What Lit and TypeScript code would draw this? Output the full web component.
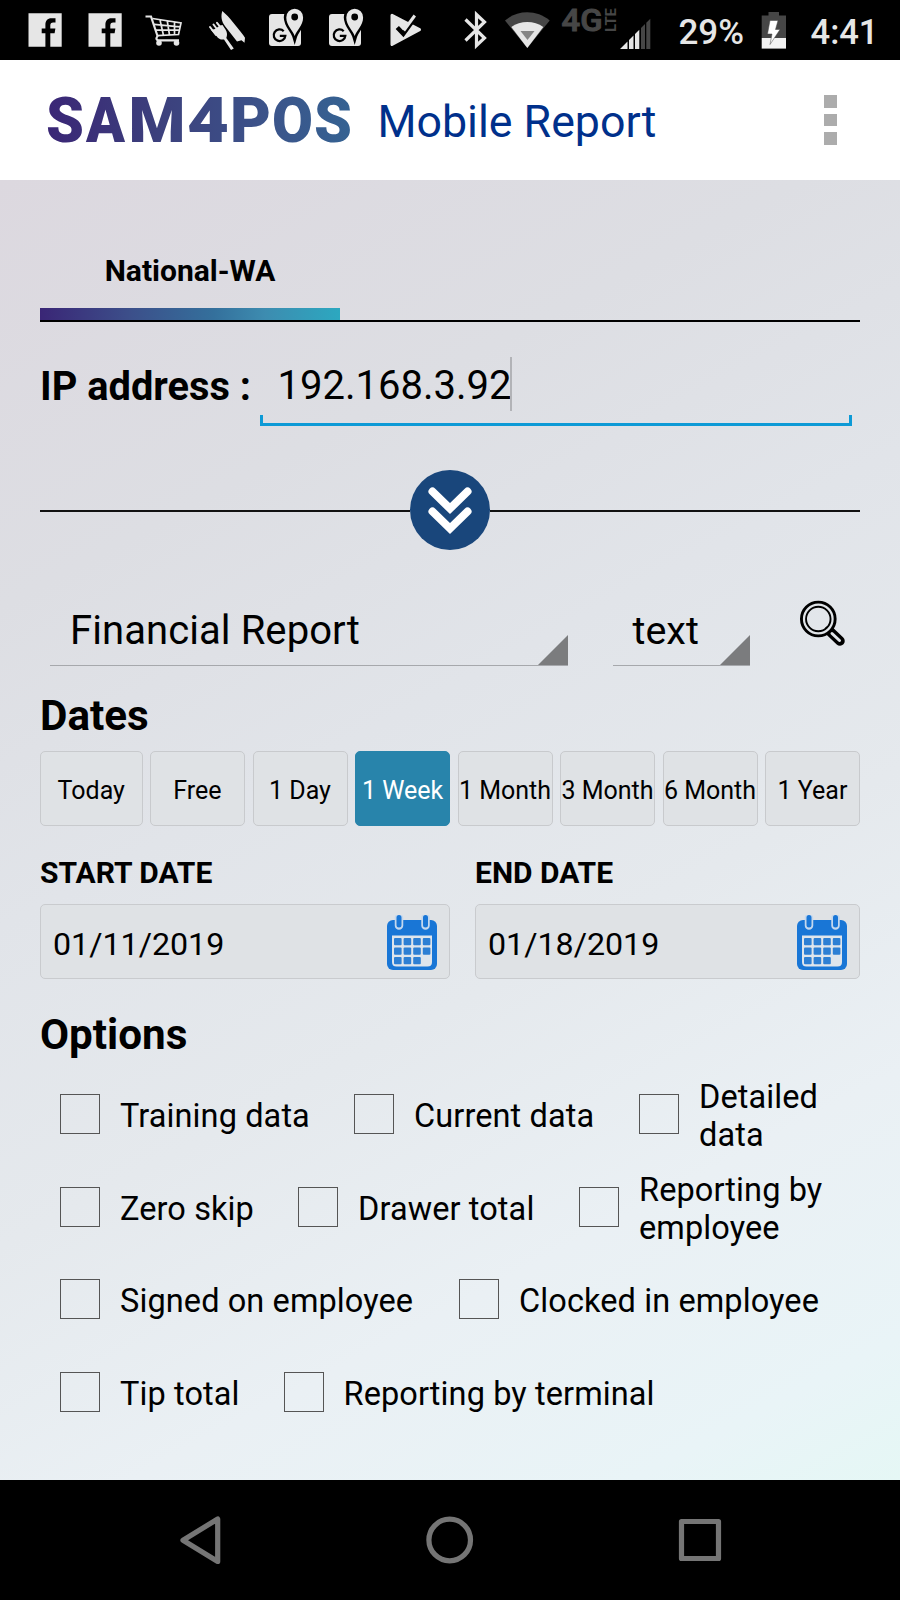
import { LitElement, html, svg, css } from "lit";
import { customElement, property, state } from "lit/decorators.js";

const G = "#e6e6e6";
const D = "#464646";

@customElement("status-bar")
class StatusBar extends LitElement {
  static styles = css`
    :host { display: flex; height: 60px; background: #000; }
    svg { display: block; flex: none; }
    text { font-family: Roboto, sans-serif; font-weight: 500; }
    .lte { font-weight: 700; }
  `;

  // Each glyph keeps bar coordinates, so a slice only names its left edge and width.
  private slice(x: number, w: number, body: unknown) {
    return html`<svg width=${w} height="60" viewBox="${x} 0 ${w} 60">${body}</svg>`;
  }

  private facebook(dx: number) {
    return svg`<g transform="translate(${dx} 0)"><path fill=${G} d="M28.5 13.3h33.2v33.4H28.500z"/>
      <path fill="#000" d="M50.300 47V33.200h4.300l.8-4.600H50.300v-3.200c0-1.900.9-2.900 2.900-2.900h2.300v-4.300h-4.100c-3.900 0-6 2.500-6 6.300v4.100h-3.700v4.600h3.700V47z"/></g>`;
  }

  private maps(dx: number) {
    return svg`<g transform="translate(${dx} 0)"><rect x="269" y="14" width="32" height="32" rx="3" fill=${G}/>
      <path d="M294.700 36c-1.600-5.600-8.400-10.500-8.400-18.600a8.400 8.700 0 0 1 16.800 0c0 8.100-6.800 13-8.400 18.600z" fill=${G} stroke="#000" stroke-width="5" paint-order="stroke"/>
      <circle cx="294.700" cy="17" r="3.400" fill="#000"/>
      <path d="M283.700 31.200a5.800 5.800 0 1 0 1.600 4.600h-5.500" fill="none" stroke="#000" stroke-width="2.300"/></g>`;
  }

  render() {
    return html`
      ${this.slice(0, 75, this.facebook(0))}
      ${this.slice(75, 60, this.facebook(60))}
      ${this.slice(135, 60, svg`<g fill="none" stroke=${G} stroke-width="1.700"><path stroke-width="2.200" d="M145.500 16.500h5.500l6.500 19.500q-2.500 4 1 4.300H179"/>
        <path d="M152.500 18.500L181 23l-2.500 11.500-21.500 1.200M154 24.300l26 2.500M155.500 30.200h24M160 20l3.500 15.500M167.300 21l2.200 14.200M174.500 22v13"/></g>
        <circle cx="159" cy="43" r="2.800" fill=${G}/><circle cx="176.500" cy="43" r="2.800" fill=${G}/>`)}
      ${this.slice(195, 60, svg`<path fill=${G} d="M222.300 11c-1.600 5-1 10.500 3 15.500L237 41.500l4.500-1.200 3 2.500.5-5-1.500-2.300c-7-9-14-18.500-21.200-24.500z"/>
        <g fill="none" stroke=${G} stroke-width="2" stroke-linecap="round"><path d="M210 27l6 8M213.500 24.500l6 8M217 22.800l5.500 7"/></g>
        <path fill=${G} d="M211 30l4-1 5-3.500 2.500-.5 3 4.500c2 3 1.800 6 .8 8.500l7.500 10.500-2.800 1.500-7-10.500c-3 .4-5.500-.5-7.500-3.500z"/>`)}
      ${this.slice(255, 60, this.maps(0))}
      ${this.slice(315, 60, this.maps(60))}
      ${this.slice(375, 75, svg`<path d="M392 15.300l27.500 14.400L392 44.500z" fill=${G} stroke=${G} stroke-width="3" stroke-linejoin="round"/>
        <path d="M397.300 27.500l6 6.300L417 15" fill="none" stroke="#000" stroke-width="4.500"/>
        <path d="M403.800 30.500L414.800 15.500" fill="none" stroke=${G} stroke-width="3"/>`)}
      ${this.slice(450, 45, svg`<path d="M465.500 19.500L484.500 38l-8 7.500v-31l8 7.500-19 18.500" fill="none" stroke=${G} stroke-width="3.200"/>`)}
      ${this.slice(495, 60, svg`<path fill=${D} d="M527.300 48L505 20.500c12.500-11 32-11 44.700 0z"/>
        <path fill=${G} d="M527.300 48L511.300 27c9-6.700 23-6.700 32 0z"/><path fill="#858585" d="M520.500 31h14l-7 9z"/>`)}
      ${this.slice(555, 65, svg`<text x="561.500" y="31" font-size="31" fill=${D} stroke=${D} stroke-width="1" textLength="41" lengthAdjust="spacingAndGlyphs">4G</text>
        <text class="lte" transform="translate(615.500 32) rotate(-90)" font-size="15" fill=${D} textLength="24" lengthAdjust="spacingAndGlyphs">LTE</text>`)}
      ${this.slice(620, 50, svg`<path fill=${G} d="M620 49l7.500-7.500V49zM629 40l4.500-4.500V49H629zM635 34l4.300-4.300V49H635z"/>
        <path fill=${D} d="M641 28l4-4v25h-4zM646.300 22.700l4-4V49h-4z"/>`)}
      ${this.slice(670, 85, svg`<text x="678.500" y="44" font-size="35.500" fill=${G} textLength="65.500" lengthAdjust="spacingAndGlyphs">29%</text>`)}
      ${this.slice(755, 45, svg`<path fill=${D} d="M768.500 12h10.500v3.500h7V38h-24.300V15.500h6.800z"/><path fill="#f2f2f2" d="M761.700 38H786v10.600h-24.300z"/>
        <path fill="#fff" stroke=${D} stroke-width=".5" d="M770 20.500h8l-2.500 9h4.500l-10 15 2-10.500h-4.500z"/>`)}
      ${this.slice(800, 100, svg`<text x="810.500" y="44" font-size="35.500" fill=${G} textLength="68" lengthAdjust="spacingAndGlyphs">4:41</text>`)}
    `;
  }
}

@customElement("app-header")
class AppHeader extends LitElement {
  static styles = css`
    :host { display: flex; align-items: center; height: 120px; background: #fff; font-family: Roboto, sans-serif; }
    svg { display: block; flex: none; margin-left: 40px; overflow: visible; }
    .brand { font-family: Roboto, sans-serif; font-weight: 900; font-size: 63px; }
    .title { margin-left: 17.500px; font-size: 44.700px; line-height: 60px; color: #00308b; padding-top: 4.500px; white-space: nowrap; flex: 1; }
    .menu { display: grid; gap: 6px; margin-right: 63px; }
    .menu i { width: 13px; height: 12.700px; background: #acacac; }
  `;

  render() {
    const letters: [string, number, number][] = [
      ["S", 46, 38], ["A", 86, 39], ["M", 128.5, 57], ["4", 187, 42], ["P", 230, 41], ["O", 272, 41], ["S", 314, 38],
    ];
    return html`
      <svg width="320" height="100" viewBox="40 70 320 100" role="img" aria-label="SAM4POS">
        <defs><linearGradient id="g" gradientUnits="userSpaceOnUse" x1="47" y1="0" x2="350" y2="0">
          <stop offset="0" stop-color="#3a2676"/><stop offset=".35" stop-color="#3c3f7c"/><stop offset=".7" stop-color="#3c5289"/><stop offset="1" stop-color="#356292"/>
        </linearGradient></defs>
        <text class="brand" y="142.300" fill="url(#g)">${letters.map(([c, x, w]) => svg`<tspan x=${x} textLength=${w} lengthAdjust="spacingAndGlyphs">${c}</tspan>`)}</text>
      </svg>
      <div class="title">Mobile Report</div>
      <div class="menu"><i></i><i></i><i></i></div>
    `;
  }
}

@customElement("check-option")
class CheckOption extends LitElement {
  static styles = css`
    :host { display: flex; align-items: center; gap: 20px; }
    .box { flex: none; box-sizing: border-box; width: 40px; height: 40px; border: 1.500px solid #555; }
    .label { font-size: 32.500px; line-height: 38px; padding-top: 4px; letter-spacing: .1px; white-space: pre; }
  `;
  @property() label = "";
  render() {
    return html`<span class="box"></span><span class="label">${this.label}</span>`;
  }
}

@customElement("date-field")
class DateField extends LitElement {
  static styles = css`
    :host { display: block; }
    .name { font-size: 30px; font-weight: 700; line-height: 36px; height: 34px; white-space: nowrap; }
    .field { margin-top: 15px; box-sizing: border-box; height: 75px; border: 1px solid #c9cbce; border-radius: 5px; background: #dfe2e5;
      display: flex; align-items: center; justify-content: space-between; padding: 2px 12px 0; font-size: 32.200px; }
    .value { padding-top: 2px; }
    svg { display: block; }
  `;
  @property() name = "";
  @property() value = "";
  render() {
    const cells: unknown[] = [];
    for (let r = 0; r < 3; r++)
      for (let c = 0; c < 4; c++)
        if (r < 2 || c < 3) cells.push(svg`<rect x=${7 + c * 9.600} y=${23 + r * 9.500} width="7.600" height="7.200" rx="1"/>`);
    return html`<div class="name">${this.name}</div>
      <div class="field"><span class="value">${this.value}</span>
        <svg width="50" height="56" viewBox="0 0 50 56">
          <rect x="0" y="5" width="50" height="50" rx="6" fill="#1976d6"/>
          <path d="M5 20.500h40V47q0 4.500-4.500 4.500h-31Q5 51.500 5 47z" fill="#dfe5ec"/>
          <g fill="#2d7fd4">${cells}</g>
          <path d="M12 3v7.500M38.500 3v7.500" stroke="#c4d8ee" stroke-width="8.500" stroke-linecap="round"/>
          <path d="M12 2.500v7.500M38.500 2.500v7.500" stroke="#1976d6" stroke-width="5" stroke-linecap="round"/>
        </svg></div>`;
  }
}

@customElement("app-root")
class AppRoot extends LitElement {
  static styles = css`
    :host { display: flex; flex-direction: column; width: 900px; height: 1600px; overflow: hidden; font-family: Roboto, sans-serif; color: #000; background: #000; }
    .page { box-sizing: border-box; height: 1300px; flex: none; padding: 60px 40px 0;
      background: linear-gradient(152deg, #dcd8df 0%, #dddee3 24%, #e1e4e9 42%, #e5e9ed 60%, #eaf0f4 77%, #e9f4f7 92%, #e5f7f5 100%); }
    .tabs { display: flex; height: 80px; border-bottom: 2px solid #000; }
    .tab { width: 300px; height: 80px; display: flex; flex-direction: column; }
    .tab span { height: 67.500px; line-height: 62px; text-align: center; font-size: 30px; font-weight: 700; }
    .tab i { height: 12.500px; background: linear-gradient(90deg, #3a2676, #3c4f8a 30%, #34709c 58%, #3d8cb0 75%, #2ca8c0); }
    .ip { display: flex; height: 104px; }
    .ip label { width: 220px; font-size: 39.800px; font-weight: 700; line-height: 129px; white-space: nowrap; }
    .input { position: relative; box-sizing: border-box; width: 592px; display: flex; align-items: flex-start; padding: 35px 0 0 17.500px; font-size: 40px; line-height: 58px; }
    .input i { width: 2px; height: 54px; background: #b2b3b7; margin-left: -1px; }
    .input::after { content: ""; position: absolute; left: 0; right: 0; bottom: 0; height: 8.500px; border: solid #0d9ad6; border-width: 0 3.500px 3.500px; }
    .divider { display: flex; align-items: center; height: 80px; margin-top: 44px; }
    .divider i { flex: 1; height: 2px; background: #111; margin-top: 2px; }
    .divider svg { display: block; }
    .pick { display: flex; margin-top: 45px; height: 72px; padding-left: 10px; }
    .spin { box-sizing: border-box; height: 71px; border-bottom: 1.500px solid #a6a8ac; display: flex; justify-content: space-between; align-items: flex-end; padding-left: 20px; font-size: 40px; line-height: 68px; white-space: nowrap; }
    .spin.report { width: 518px; letter-spacing: .08px; }
    .spin.kind { width: 137.500px; margin-left: 44.500px; font-size: 39.500px; }
    .spin i { width: 30px; height: 30px; background: #7b7c7e; clip-path: polygon(100% 0, 100% 100%, 0 100%); }
    .pick svg { margin-left: 45px; }
    h2 { margin: 0; font-size: 42.200px; font-weight: 700; line-height: 50px; }
    .dates { margin-top: 24px; }
    .ranges { display: flex; gap: 7.500px; margin-top: 10px; }
    .range { box-sizing: border-box; width: 95px; height: 75px; border: 1px solid #c8cacd; border-radius: 5px; background: #dfe2e5;
      font: 25px/78px Roboto, sans-serif; display: flex; justify-content: center; white-space: nowrap; flex: none; }
    .range.first { width: 102.500px; }
    .range.on { background: #2884ab; border-color: #2884ab; color: #fff; }
    .fields { display: grid; grid-template-columns: 410px 385px; gap: 25px; margin-top: 29px; }
    .options { margin-top: 31px; }
    .rows { margin-top: 8px; padding-left: 20px; }
    .row { display: flex; height: 92.600px; align-items: center; }
    check-option { flex: none; }
    nav { flex: 1; display: flex; background: #000; }
    nav svg { display: block; }
  `;

  @state() private range = "1 Week";

  private ranges = ["Today", "Free", "1 Day", "1 Week", "1 Month", "3 Month", "6 Month", "1 Year"];
  private rows: { label: string; width: number }[][] = [
    [{ label: "Training data", width: 294 }, { label: "Current data", width: 285 }, { label: "Detailed\ndata", width: 220 }],
    [{ label: "Zero skip", width: 238 }, { label: "Drawer total", width: 281 }, { label: "Reporting by\nemployee", width: 270 }],
    [{ label: "Signed on employee", width: 399 }, { label: "Clocked in employee", width: 400 }],
    [{ label: "Tip total", width: 223.5 }, { label: "Reporting by terminal", width: 400 }],
  ];

  render() {
    return html`
      <status-bar></status-bar>
      <app-header></app-header>
      <div class="page">
        <div class="tabs"><div class="tab"><span>National-WA</span><i></i></div></div>
        <div class="ip"><label>IP address :</label><div class="input"><span>192.168.3.92</span><i></i></div></div>
        <div class="divider"><i></i>
          <svg width="80" height="80" viewBox="0 0 80 80"><circle cx="40" cy="40" r="40" fill="#19467b"/>
            <path d="M22.500 21.500L40 38.500l17.500-17M22.500 41.500L40 58.500l17.500-17" fill="none" stroke="#fff" stroke-width="8" stroke-linecap="round"/></svg>
          <i></i></div>
        <div class="pick">
          <div class="spin report"><span>Financial Report</span><i></i></div>
          <div class="spin kind"><span>text</span><i></i></div>
          <svg width="60" height="60" viewBox="795 595 60 60">
            <path d="M829 630.500l11 10.500" stroke="#000" stroke-width="9.500" stroke-linecap="round" />
            <circle cx="818.300" cy="619" r="14.800" fill="none" stroke="#000" stroke-width="7"/>
            <circle cx="818.300" cy="619" r="14.300" fill="none" stroke="#e1e5e9" stroke-width="2.200"/>
            <path d="M832 633.500l7.500 7" stroke="#e1e5e9" stroke-width="3" stroke-linecap="round"/>
          </svg>
        </div>
        <h2 class="dates">Dates</h2>
        <div class="ranges">${this.ranges.map(
          (r, i) => html`<div class="range ${i === 0 ? "first" : ""} ${r === this.range ? "on" : ""}" @click=${() => (this.range = r)}>${r}</div>`
        )}</div>
        <div class="fields">
          <date-field name="START DATE" value="01/11/2019"></date-field>
          <date-field name="END DATE" value="01/18/2019"></date-field>
        </div>
        <h2 class="options">Options</h2>
        <div class="rows">${this.rows.map(
          (row) => html`<div class="row">${row.map((o) => html`<check-option .label=${o.label} style="width:${o.width}px"></check-option>`)}</div>`
        )}</div>
      </div>
      <nav>
        <svg width="900" height="120" viewBox="0 1480 900 120" fill="none" stroke="#757575" stroke-width="5.200" stroke-linejoin="round">
          <path d="M217.700 1519v42.500L183 1540.200z"/><circle cx="449.700" cy="1540" r="20.800"/><rect x="681.500" y="1521.500" width="37" height="37"/>
        </svg>
      </nav>
    `;
  }
}
